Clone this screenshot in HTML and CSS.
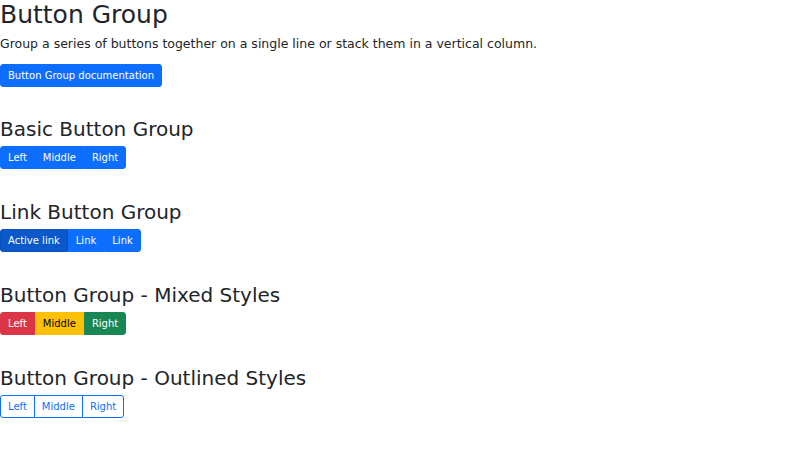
FILE: index.html
```html
<!DOCTYPE html>
<html>
<head>
<meta charset="utf-8">
<link rel="stylesheet" href="styles.css">
</head>
<body>
<div class="page">
  <h1 class="title">Button Group</h1>
  <p class="lead">Group a series of buttons together on a single line or stack them in a vertical column.</p>
  <a class="btn btn-primary doc">Button Group documentation</a>

  <section class="sec">
    <h2 class="sec-title">Basic Button Group</h2>
    <div class="group">
      <a class="btn btn-primary">Left</a><a class="btn btn-primary">Middle</a><a class="btn btn-primary">Right</a>
    </div>
  </section>

  <section class="sec">
    <h2 class="sec-title">Link Button Group</h2>
    <div class="group">
      <a class="btn btn-primary active">Active link</a><a class="btn btn-primary">Link</a><a class="btn btn-primary">Link</a>
    </div>
  </section>

  <section class="sec">
    <h2 class="sec-title">Button Group - Mixed Styles</h2>
    <div class="group">
      <a class="btn btn-danger">Left</a><a class="btn btn-warning">Middle</a><a class="btn btn-success">Right</a>
    </div>
  </section>

  <section class="sec">
    <h2 class="sec-title">Button Group - Outlined Styles</h2>
    <div class="group outline">
      <a class="btn btn-outline">Left</a><a class="btn btn-outline">Middle</a><a class="btn btn-outline">Right</a>
    </div>
  </section>
</div>
</body>
</html>
```
FILE: styles.css
```css
html, body {
  margin: 0;
  padding: 0;
  background: #fff;
}
body {
  font-family: "DejaVu Sans", sans-serif;
  color: #212529;
  font-size: 12px;
  line-height: 1.5;
}
.page {
  display: flex;
  flex-direction: column;
  align-items: flex-start;
}
.title {
  font-size: 25px;
  font-weight: 400;
  line-height: 30px;
  margin: 0 0 4px 0;
}
.lead {
  font-size: 12.5px;
  line-height: 19px;
  margin: 0 0 11px 0;
}
.btn {
  display: inline-block;
  font-size: 10px;
  line-height: 15px;
  padding: 3px 7px;
  border: 1px solid transparent;
  border-radius: 3px;
  text-decoration: none;
  cursor: pointer;
}
.btn-primary { background: #0d6efd; color: #fff; border-color: #0d6efd; }
.btn-primary.active { background: #0a58ca; border-color: #0a53be; }
.btn-danger { background: #dc3545; color: #fff; border-color: #dc3545; }
.btn-warning { background: #ffc107; color: #000; border-color: #ffc107; }
.btn-success { background: #198754; color: #fff; border-color: #198754; }
.btn-outline { background: #fff; color: #0d6efd; border-color: #0d6efd; }
.doc { margin-bottom: 30px; }
.sec {
  display: flex;
  flex-direction: column;
  align-items: flex-start;
  margin-bottom: 31px;
}
.sec-title {
  font-size: 20px;
  font-weight: 400;
  line-height: 24px;
  margin: 0 0 5px 0;
}
.group {
  display: inline-flex;
}
.group .btn { border-radius: 0; }
.group .btn:first-child { border-radius: 3px 0 0 3px; }
.group .btn:last-child { border-radius: 0 3px 3px 0; }
.group.outline .btn + .btn { margin-left: -1px; }
```
